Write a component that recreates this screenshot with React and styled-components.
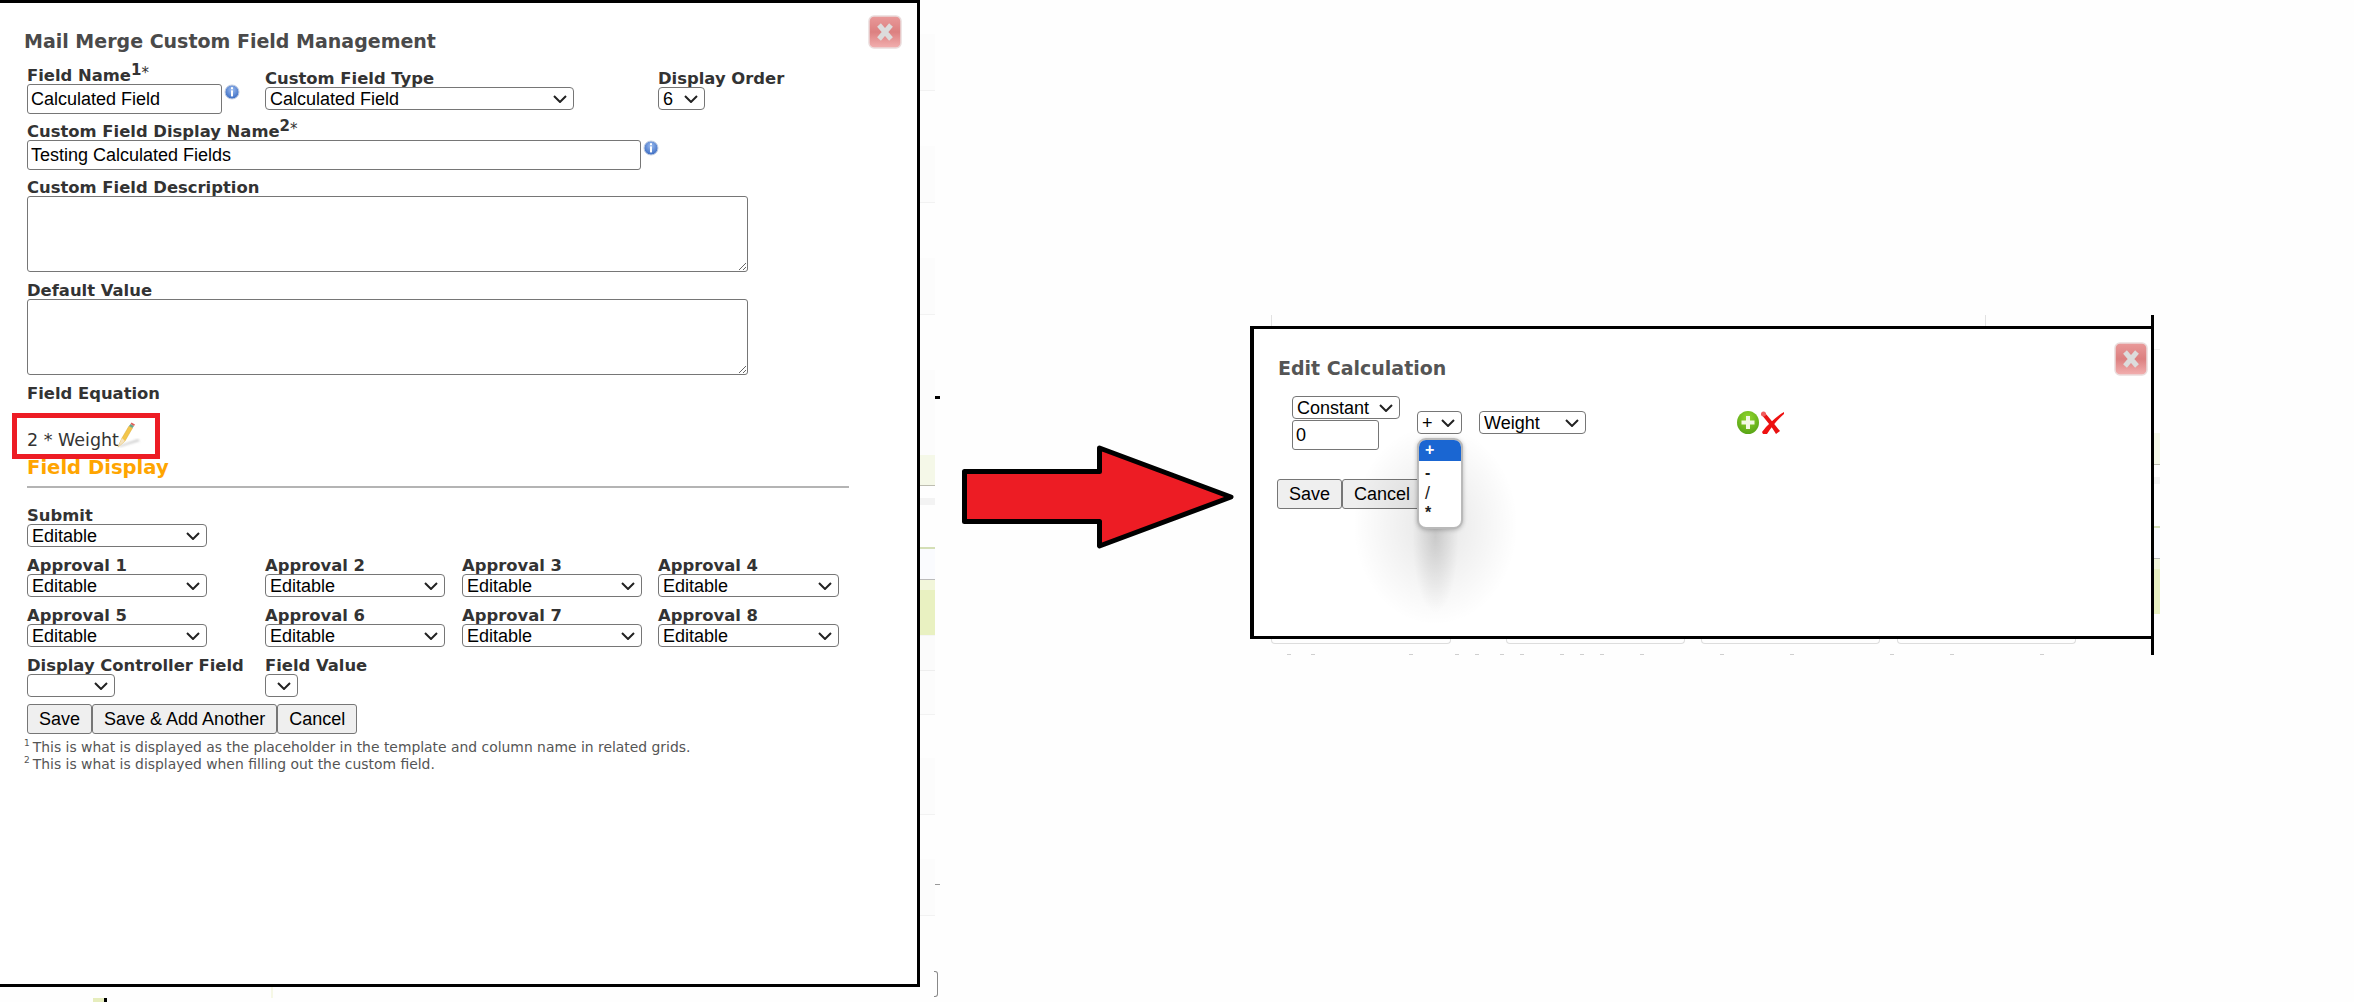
import React from 'react';
import styled, { createGlobalStyle } from 'styled-components';

const GlobalStyle = createGlobalStyle`
    html, body {
        margin: 0;
        padding: 0;
        background: #fefefe;
        overflow: hidden;
    }
`;

const Page = styled.div`
    position: relative;
    width: 2354px;
    height: 1002px;
    font-family: "Liberation Sans", Arial, sans-serif;
`;

/* the faded page that shows behind the two cropped windows */
const Strip = styled.div`
    position: absolute;
    left: ${props => props.$left}px;
    top: ${props => props.$top}px;
    width: ${props => props.$width}px;
    display: flex;
    flex-direction: column;
`;

const Band = styled.div`
    height: ${props => props.$h}px;
    background: ${props => props.$bg || 'transparent'};
`;

const Speck = styled.div`
    position: absolute;
    left: ${props => props.$x}px;
    top: ${props => props.$y}px;
    width: ${props => props.$w}px;
    height: ${props => props.$h}px;
    background: ${props => props.$bg || '#000'};
`;

const Bracket = styled.div`
    position: absolute;
    left: 934px;
    top: 971px;
    width: 3px;
    height: 24px;
    border: 1px solid #888;
    border-left: 0;
    border-radius: 0 3px 3px 0;
`;

const GhostCard = styled.div`
    position: absolute;
    left: ${props => props.$x}px;
    top: 636px;
    width: ${props => props.$w}px;
    height: 7px;
    border: 1px solid #ddd;
    border-top: 0;
    border-radius: 0 0 4px 4px;
`;

const Panel = styled.section`
    position: absolute;
    left: 0;
    top: 0;
    width: 920px;
    height: 987px;
    box-sizing: border-box;
    background: #fff;
    border-top: 3px solid #000;
    border-right: 3px solid #000;
    border-bottom: 3px solid #000;
    padding: 26px 0 0 27px;
    display: flex;
    flex-direction: column;
    gap: 9px;
`;

const Title = styled.h2`
    margin: 0 0 4px -3px;
    height: 24px;
    font: bold 19px/24px "DejaVu Sans", Verdana, sans-serif;
    color: #4a4a4a;
    white-space: nowrap;
`;

const CloseSlot = styled.div`
    position: absolute;
    right: ${props => props.$right}px;
    top: ${props => props.$top}px;
    line-height: 0;
`;

const Label = styled.div`
    height: 18px;
    padding-top: 1px;
    margin-bottom: -1px;
    font: bold 16.4px/18px "DejaVu Sans", Verdana, sans-serif;
    color: #333;
    white-space: nowrap;

    sup {
        font-size: 15px;
        line-height: 0;
        vertical-align: 6px;
        font-weight: 700;
    }

    small {
        font-size: 15px;
        font-weight: 400;
        vertical-align: 3px;
        line-height: 0;
    }
`;

const Grid = styled.div`
    display: grid;
    grid-template-columns: 238px 197px 196px 200px;
    column-gap: 0;
`;

const Cell = styled.div`
    grid-column: ${props => props.$col || 'auto'};
    padding-top: ${props => props.$pt || 0}px;
`;

const Field = styled.div`
    margin-top: ${props => props.$mt || 0}px;
`;

const InputRow = styled.div`
    display: flex;
    align-items: flex-start;

    svg {
        margin-left: 2px;
    }
`;

const TextInput = styled.input`
    box-sizing: border-box;
    width: ${props => props.$w}px;
    height: 30px;
    padding: 1px 3px;
    font: 18px "Liberation Sans", Arial, sans-serif;
    color: #000;
    border: 1px solid #767676;
    border-radius: 3px;
    background: #fff;
    outline: none;
`;

const Select = styled.select`
    box-sizing: border-box;
    display: block;
    width: ${props => props.$w}px;
    height: 23px;
    padding: 1px 0 0 4px;
    font: 18px/21px "Liberation Sans", Arial, sans-serif;
    color: #000;
    border: 1px solid #767676;
    border-radius: 4px;
    appearance: none;
    background: #fff url("data:image/svg+xml,%3Csvg xmlns='http://www.w3.org/2000/svg' width='14' height='8'%3E%3Cpath d='M1 1l6 6 6-6' fill='none' stroke='%23222' stroke-width='2'/%3E%3C/svg%3E") no-repeat right 6px center;
`;

const TextArea = styled.textarea`
    display: block;
    box-sizing: border-box;
    width: 721px;
    height: 76px;
    border: 1px solid #767676;
    border-radius: 3px;
    background: #fff;
    resize: both;
    outline: none;
`;

const Equation = styled.div`
    position: relative;
    margin-top: 20px;
    height: 18px;
    display: flex;
    align-items: center;
    font: 17.5px/18px "DejaVu Sans", Verdana, sans-serif;
    color: #333;
`;

const PencilSlot = styled.span`
    position: absolute;
    left: 90px;
    top: -9px;
    line-height: 0;
`;

const RedBox = styled.div`
    position: absolute;
    left: -15px;
    top: -18px;
    width: 148px;
    height: 46px;
    box-sizing: border-box;
    border: 5px solid #ed1c24;
    pointer-events: none;
`;

const SectionTitle = styled.div`
    height: 20px;
    font: bold 19.6px/20px "DejaVu Sans", Verdana, sans-serif;
    color: #ffa500;
`;

const Rule = styled.hr`
    width: 822px;
    height: 2px;
    margin: -1px 0 9px;
    border: 0;
    background: #b4b4b4;
`;

const ButtonRow = styled.div`
    display: flex;
    margin: ${props => props.$margin || 0};
`;

const Button = styled.button`
    box-sizing: border-box;
    height: 30px;
    padding: 0 11px;
    font: 18px "Liberation Sans", Arial, sans-serif;
    color: #000;
    background: #efefef;
    border: 1px solid #767676;
    border-radius: 3px;
    white-space: nowrap;
`;

const Notes = styled.div`
    margin: -4px 0 0 -3px;
    font: 13.9px/17px "DejaVu Sans", Verdana, sans-serif;
    color: #555;
    white-space: nowrap;

    sup {
        font-size: 9px;
        line-height: 0;
        vertical-align: 6px;
        margin-right: 3px;
    }
`;

const ArrowSlot = styled.div`
    position: absolute;
    left: 955px;
    top: 438px;
    line-height: 0;
`;

const Dialog = styled.section`
    position: absolute;
    left: 1250px;
    top: 326px;
    width: 904px;
    height: 313px;
    box-sizing: border-box;
    background: #fff;
    border: 3px solid #000;
    border-left-width: 4px;
    border-right-width: 3px;
    padding: 27px 0 0 24px;

    &::after {
        content: '';
        position: absolute;
        right: -3px;
        top: -14px;
        width: 3px;
        height: 340px;
        background: #000;
    }
`;

const DialogTitle = styled(Title)`
    margin: 0 0 16px;
    color: #555;
`;

const CalcRow = styled.div`
    display: flex;
    align-items: flex-start;
    gap: 17px;
    margin-left: 14px;
`;

const OperandColumn = styled.div`
    display: flex;
    flex-direction: column;
    gap: 1px;
`;

const OperatorSlot = styled.div`
    position: relative;
    margin-top: 15px;
`;

const PopupShadow = styled.div`
    position: absolute;
    left: -64px;
    top: 14px;
    width: 165px;
    height: 200px;
    background:
        radial-gradient(ellipse 14% 38% at 50% 56%, rgba(0, 0, 0, 0.13), rgba(0, 0, 0, 0) 100%),
        radial-gradient(ellipse 50% 50% at 50% 50%, rgba(0, 0, 0, 0.1), rgba(0, 0, 0, 0) 100%);
    pointer-events: none;
`;

const Popup = styled.ul`
    position: absolute;
    left: 0;
    top: 27px;
    width: 46px;
    height: 91px;
    box-sizing: border-box;
    margin: 0;
    padding: 0;
    list-style: none;
    background: #fff;
    border: 2px solid #b9b9b9;
    border-radius: 9px;
    overflow: hidden;
    box-shadow: 0 1px 4px rgba(0, 0, 0, 0.25);
`;

const PopupOption = styled.li`
    height: ${props => props.$selected ? 21 : 20}px;
    margin-bottom: ${props => props.$selected ? 2 : 0}px;
    padding-left: 6px;
    font: ${props => props.$plain ? '400 18px/20px' : '700 16px/20px'} "Liberation Sans", Arial, sans-serif;
    color: ${props => props.$selected ? '#fff' : '#222'};
    background: ${props => props.$selected ? '#1a66d2' : 'transparent'};
`;

const RowIcons = styled.div`
    display: flex;
    margin: 15px 0 0 133px;
    line-height: 0;
`;

function CloseIcon() {
    return (
        <svg width="34" height="34" viewBox="0 0 34 34">
            <defs>
                <linearGradient id="closeFill" x1="0" y1="0" x2="0" y2="1">
                    <stop offset="0" stopColor="#e99a9a" />
                    <stop offset="0.5" stopColor="#dc8080" />
                    <stop offset="1" stopColor="#f2b0b0" />
                </linearGradient>
                <filter id="closeBlur"><feGaussianBlur stdDeviation="0.6" /></filter>
            </defs>
            <g filter="url(#closeBlur)">
                <rect x="1" y="1" width="32" height="32" rx="5" fill="url(#closeFill)" stroke="#eadcdc" strokeWidth="1.5" />
                <path d="M11 10 L23 24 M23 10 L11 24" stroke="#dcdcdc" strokeWidth="5" />
            </g>
        </svg>
    );
}

function InfoIcon() {
    return (
        <svg width="16" height="16" viewBox="0 0 16 16">
            <defs>
                <radialGradient id="infoFill" cx="0.5" cy="0.35" r="0.7">
                    <stop offset="0" stopColor="#9dbdf0" />
                    <stop offset="1" stopColor="#2f62bd" />
                </radialGradient>
            </defs>
            <circle cx="8" cy="8" r="7" fill="url(#infoFill)" stroke="#c4cfe2" strokeWidth="1" />
            <rect x="7" y="3.2" width="2" height="2" fill="#fff" />
            <rect x="7" y="6.4" width="2" height="6" fill="#fff" />
        </svg>
    );
}

function PencilIcon() {
    return (
        <svg width="26" height="28" viewBox="0 0 26 28">
            <defs>
                <filter id="pencilBlur"><feGaussianBlur stdDeviation="1" /></filter>
            </defs>
            <path d="M1 24 L21 17 L23 19 L3 25 Z" fill="#bdbdbd" opacity="0.7" filter="url(#pencilBlur)" />
            <path d="M1 25 L5 16 L12 4 L15.5 6 L8 19 Z" fill="#f3c64a" stroke="#d8a93a" strokeWidth="0.5" />
            <path d="M1 25 L5 16 L8 19 Z" fill="#f5e3c0" />
            <path d="M12 4 L13.5 2 L17 4 L15.5 6 Z" fill="#6aa58a" />
            <path d="M13.5 2 L14.5 0.5 L18 2.5 L17 4 Z" fill="#e0605a" />
        </svg>
    );
}

function PlusIcon() {
    return (
        <svg width="24" height="23" viewBox="0 0 24 23">
            <defs>
                <radialGradient id="plusFill" cx="0.5" cy="0.3" r="0.8">
                    <stop offset="0" stopColor="#93d72e" />
                    <stop offset="1" stopColor="#4f9d12" />
                </radialGradient>
            </defs>
            <ellipse cx="12" cy="11.5" rx="11" ry="11.5" fill="url(#plusFill)" />
            <path d="M12 5 V18 M5.5 11.5 H18.5" stroke="#f1f8e4" strokeWidth="4" />
        </svg>
    );
}

function RemoveIcon() {
    return (
        <svg width="24" height="23" viewBox="0 0 24 23">
            <path d="M1 3 L4 1 C9 6 15 14 20 20 L16 23 C12 16 6 9 1 3 Z" fill="#e81212" />
            <path d="M24 1 C17 5 8 13 2 21 L3 23 L7 23 C12 15 18 8 24 3 Z" fill="#ee1111" />
            <circle cx="3.5" cy="3" r="2.5" fill="#f25c5c" />
        </svg>
    );
}

function Arrow() {
    return (
        <svg width="290" height="120" viewBox="0 0 290 120">
            <polygon
                points="9.5,33.5 144.5,33.5 144.5,10 276,59 144.5,108 144.5,83.5 9.5,83.5"
                fill="#ed1c24"
                stroke="#000"
                strokeWidth="5"
                strokeLinejoin="round"
            />
        </svg>
    );
}

const leftBands = [
    [34], [56, '#fcfcfc'], [1, '#f2f2f2'], [55], [56, '#fcfcfc'], [1, '#f2f2f2'], [55], [56, '#fcfcfc'], [1, '#f2f2f2'], [55],
    [85, '#fcfcfc'], [30, '#f5f8e8'], [1, '#bdbdb0'], [12], [7, '#f3f3f3'], [42], [2, '#d4dfb6'], [30, '#fafbfe'], [1, '#bbbbbb'],
    [10, '#f2f6da'], [45, '#e9f1c1'], [1, '#f5f5f5'], [34, '#fbfbfb'], [1, '#eeeeee'], [43, '#fcfcfc'], [1, '#f2f2f2'], [43],
    [56, '#fcfcfc'], [1, '#f2f2f2'], [44], [56, '#fcfcfc'], [1, '#f2f2f2'],
];

const rightBands = [
    [1, '#efefef'], [83], [31, '#f5f8e8'], [1, '#bdbdb0'], [12], [7, '#f3f3f3'], [42], [2, '#d4dfb6'], [30, '#fafbfe'], [1, '#bbbbbb'],
    [10, '#f2f6da'], [45, '#e9f1c1'],
];

const ghostDots = [1287, 1311, 1409, 1455, 1475, 1500, 1520, 1560, 1580, 1600, 1640, 1720, 1790, 1890, 1950, 2040];

const approvalRows = [
    [1, 2, 3, 4],
    [5, 6, 7, 8],
];

function EditableSelect({ width }) {
    return (
        <Select $w={width} defaultValue="Editable">
            <option>Editable</option>
            <option>Read Only</option>
            <option>Hidden</option>
        </Select>
    );
}

function MergeFieldWindow() {
    const widths = [180, 180, 180, 181];

    return (
        <Panel>
            <CloseSlot $right={15} $top={12}><CloseIcon /></CloseSlot>
            <Title>Mail Merge Custom Field Management</Title>

            <Grid>
                <Cell>
                    <Label>Field Name<sup>1</sup><small>*</small></Label>
                    <InputRow>
                        <TextInput $w={195} defaultValue="Calculated Field" />
                        <InfoIcon />
                    </InputRow>
                </Cell>
                <Cell $pt={3}>
                    <Label>Custom Field Type</Label>
                    <Select $w={309} defaultValue="Calculated Field">
                        <option>Calculated Field</option>
                    </Select>
                </Cell>
                <Cell $col={4} $pt={3}>
                    <Label>Display Order</Label>
                    <Select $w={47} defaultValue="6">
                        <option>6</option>
                    </Select>
                </Cell>
            </Grid>

            <Field $mt={-1}>
                <Label>Custom Field Display Name<sup>2</sup><small>*</small></Label>
                <InputRow>
                    <TextInput $w={614} defaultValue="Testing Calculated Fields" />
                    <InfoIcon />
                </InputRow>
            </Field>

            <Field $mt={-1}>
                <Label>Custom Field Description</Label>
                <TextArea />
            </Field>

            <Field>
                <Label>Default Value</Label>
                <TextArea />
            </Field>

            <Label>Field Equation</Label>

            <Equation>
                2 * Weight
                <PencilSlot><PencilIcon /></PencilSlot>
                <RedBox />
            </Equation>

            <SectionTitle>Field Display</SectionTitle>
            <Rule />

            <Field>
                <Label>Submit</Label>
                <EditableSelect width={180} />
            </Field>

            {approvalRows.map(row => (
                <Grid key={row[0]}>
                    {row.map((n, i) => (
                        <Cell key={n}>
                            <Label>Approval {n}</Label>
                            <EditableSelect width={widths[i]} />
                        </Cell>
                    ))}
                </Grid>
            ))}

            <Grid>
                <Cell>
                    <Label>Display Controller Field</Label>
                    <Select $w={88}><option></option></Select>
                </Cell>
                <Cell>
                    <Label>Field Value</Label>
                    <Select $w={33}><option></option></Select>
                </Cell>
            </Grid>

            <ButtonRow $margin="-2px 0 0">
                <Button>Save</Button>
                <Button>Save &amp; Add Another</Button>
                <Button>Cancel</Button>
            </ButtonRow>

            <Notes>
                <div><sup>1</sup>This is what is displayed as the placeholder in the template and column name in related grids.</div>
                <div><sup>2</sup>This is what is displayed when filling out the custom field.</div>
            </Notes>
        </Panel>
    );
}

function CalculationWindow() {
    return (
        <Dialog>
            <CloseSlot $right={3} $top={13}><CloseIcon /></CloseSlot>
            <DialogTitle>Edit Calculation</DialogTitle>

            <CalcRow>
                <OperandColumn>
                    <Select $w={108} defaultValue="Constant">
                        <option>Constant</option>
                    </Select>
                    <TextInput $w={87} defaultValue="0" />
                </OperandColumn>

                <OperatorSlot>
                    <Select $w={45} defaultValue="+">
                        <option>+</option>
                        <option>-</option>
                        <option>/</option>
                        <option>*</option>
                    </Select>
                    <PopupShadow />
                    <Popup>
                        <PopupOption $selected>+</PopupOption>
                        <PopupOption>-</PopupOption>
                        <PopupOption $plain>/</PopupOption>
                        <PopupOption>*</PopupOption>
                    </Popup>
                </OperatorSlot>

                <OperatorSlot>
                    <Select $w={107} defaultValue="Weight">
                        <option>Weight</option>
                    </Select>
                </OperatorSlot>

                <RowIcons>
                    <PlusIcon />
                    <RemoveIcon />
                </RowIcons>
            </CalcRow>

            <ButtonRow $margin="29px 0 0 -1px">
                <Button>Save</Button>
                <Button>Cancel</Button>
            </ButtonRow>
        </Dialog>
    );
}

function App() {
    return (
        <Page>
            <GlobalStyle />

            <Strip $left={920} $top={0} $width={15}>
                {leftBands.map(([h, bg], i) => <Band key={i} $h={h} $bg={bg} />)}
            </Strip>
            <Strip $left={2154} $top={349} $width={6}>
                {rightBands.map(([h, bg], i) => <Band key={i} $h={h} $bg={bg} />)}
            </Strip>

            <Speck $x={935} $y={396} $w={5} $h={3} />
            <Speck $x={935} $y={884} $w={5} $h={1} $bg="#999" />
            <Speck $x={93} $y={998} $w={11} $h={4} $bg="#e6edbd" />
            <Speck $x={104} $y={998} $w={3} $h={4} />
            <Speck $x={271} $y={987} $w={2} $h={11} $bg="#f6f8e6" />
            <Speck $x={1271} $y={315} $w={1} $h={11} $bg="#e2e2e2" />
            <Speck $x={1985} $y={315} $w={1} $h={11} $bg="#e2e2e2" />
            {ghostDots.map(x => <Speck key={x} $x={x} $y={654} $w={4} $h={1} $bg="#cfcfcf" />)}
            <Bracket />
            <GhostCard $x={1271} $w={178} />
            <GhostCard $x={1506} $w={177} />
            <GhostCard $x={1701} $w={177} />
            <GhostCard $x={1897} $w={177} />

            <MergeFieldWindow />
            <ArrowSlot><Arrow /></ArrowSlot>
            <CalculationWindow />
        </Page>
    );
}

export default App;
